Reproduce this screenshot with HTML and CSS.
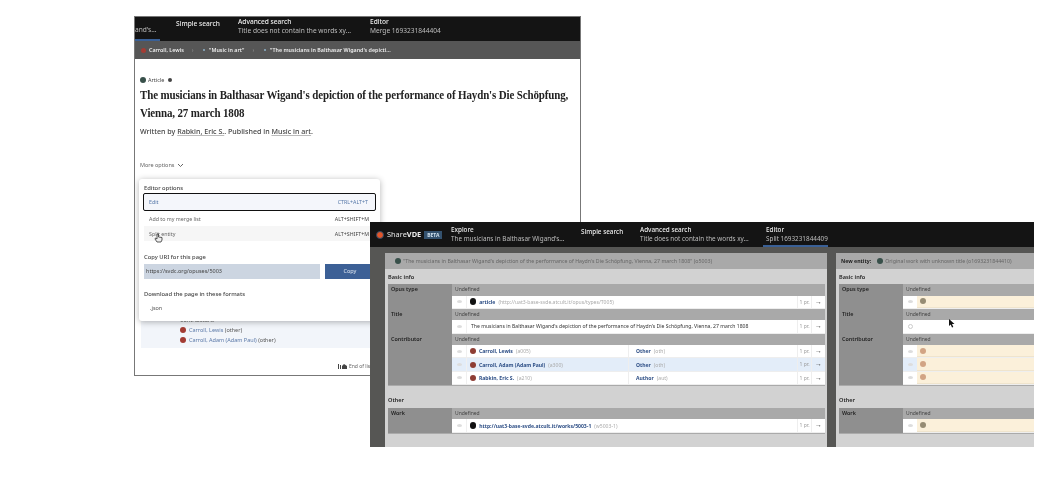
FILE: index.html
```html
<!DOCTYPE html>
<html lang="en">
<head>
<meta charset="utf-8">
<title>ShareVDE editor</title>
<link rel="stylesheet" href="styles.css">
</head>
<body>
<section class="win win-a">
  <header class="bar bar-a">
    <div class="tab tab-cut"><span class="tab-sub">and's...</span></div>
    <div class="tab tab-simple"><b>Simple search</b></div>
    <div class="tab tab-adv"><b>Advanced search</b><span class="tab-sub">Title does not contain the words xy...</span></div>
    <div class="tab"><b>Editor</b><span class="tab-sub">Merge 1693231844404</span></div>
  </header>
  <nav class="crumbs">
    <span class="crumb c1"><i class="ic-red"></i>Carroll, Lewis<span class="sep">›</span></span>
    <span class="crumb c2"><i class="dot"></i>"Music in art"<span class="sep">›</span></span>
    <span class="crumb"><i class="dot"></i>"The musicians in Balthasar Wigand's depicti...</span>
  </nav>
  <main class="article">
    <div class="kind"><i class="ic-green"></i>Article<i class="ic-info"></i></div>
    <h1>The musicians in Balthasar Wigand's depiction of the performance of Haydn's Die Schöpfung, Vienna, 27 march 1808</h1>
    <p class="byline">Written by <u>Rabkin, Eric S.</u>. Published in <u>Music in art</u>.</p>
    <div class="more">More options <svg width="7" height="5" viewBox="0 0 7 5"><path d="M1 1l2.500 2.500L6 1" fill="none" stroke="#555" stroke-width=".9"/></svg></div>
  </main>
  <div class="band">
    <div class="contrib">Contributors:</div>
    <div class="contrib"><i class="ic-red"></i><a>Carroll, Lewis</a> (other)</div>
    <div class="contrib"><i class="ic-red"></i><a>Carroll, Adam (Adam Paul)</a> (other)</div>
  </div>
  <div class="end"><svg width="9" height="7" viewBox="0 0 9 7"><path d="M0 1h1v5H0zM2 2h1v4H2zM4 3l2-2 3 2v3H4z" fill="#444"/></svg> End of list</div>
  <aside class="menu">
    <h2>Editor options</h2>
    <div class="opt opt-on"><span>Edit</span><span>CTRL+ALT+T</span></div>
    <div class="opt"><span>Add to my merge list</span><span class="key">ALT+SHIFT+M</span></div>
    <div class="opt opt-hover"><span>Split entity</span><span class="key">ALT+SHIFT+M</span></div>
    <h2 class="h-uri">Copy URI for this page</h2>
    <div class="copy"><div class="uri">https://svdc.org/opuses/5003</div><div class="btn">Copy</div></div>
    <h2 class="h-dl">Download the page in these formats</h2>
    <div class="json">.json</div>
  </aside>
  <svg class="hand" width="9" height="10" viewBox="0 0 9 10"><path d="M3 1v5L1.500 5 1 6l2 3h4l1-2V4.500L4.500 4V1z" fill="#eee" stroke="#333" stroke-width=".8"/></svg>
</section>

<section class="win win-b">
  <header class="bar bar-b">
    <div class="logo"><i class="logo-dot"></i><span class="logo-name">Share<b>VDE</b></span><span class="beta">BETA</span></div>
    <div class="tab tab-explore"><b>Explore</b><span class="tab-sub">The musicians in Balthasar Wigand's...</span></div>
    <div class="tab tab-simple2"><b>Simple search</b></div>
    <div class="tab tab-adv2"><b>Advanced search</b><span class="tab-sub">Title does not contain the words xy...</span></div>
    <div class="tab tab-on"><b>Editor</b><span class="tab-sub">Split 1693231844409</span></div>
  </header>
  <div class="work">
    <div class="panel panel-left">
      <div class="phead"><i class="ic-green"></i>"The musicians in Balthasar Wigand's depiction of the performance of Haydn's Die Schöpfung, Vienna, 27 march 1808" (o5003)</div>
      <div class="sect">Basic info</div>
      <div class="tbl">
        <div class="lab lab-2">Opus type</div>
        <div class="und">Undefined</div>
        <div class="row"><i class="eye"></i><div class="val"><i class="ic-black"></i><a>article</a><em>(http://uat3-base-svde.atcult.it/opus/types/T005)</em></div><span class="pr">1 pr.</span><span class="arr">→</span></div>
      </div>
      <div class="tbl">
        <div class="lab lab-2">Title</div>
        <div class="und">Undefined</div>
        <div class="row"><i class="eye"></i><div class="val val-text">The musicians in Balthasar Wigand's depiction of the performance of Haydn's Die Schöpfung, Vienna, 27 march 1808</div><span class="pr">1 pr.</span><span class="arr">→</span></div>
      </div>
      <div class="tbl">
        <div class="lab lab-4">Contributor</div>
        <div class="und">Undefined</div>
        <div class="row"><i class="eye"></i><div class="val val-c"><i class="ic-red"></i><a>Carroll, Lewis</a><em>(a005)</em></div><div class="role"><a>Other</a><em>(oth)</em></div><span class="pr">1 pr.</span><span class="arr">→</span></div>
        <div class="row row-blue"><i class="eye"></i><div class="val val-c"><i class="ic-red"></i><a>Carroll, Adam (Adam Paul)</a><em>(a300)</em></div><div class="role"><a>Other</a><em>(oth)</em></div><span class="pr">1 pr.</span><span class="arr">→</span></div>
        <div class="row"><i class="eye"></i><div class="val val-c"><i class="ic-red"></i><a>Rabkin, Eric S.</a><em>(a210)</em></div><div class="role"><a>Author</a><em>(aut)</em></div><span class="pr">1 pr.</span><span class="arr">→</span></div>
      </div>
      <div class="sect sect-other">Other</div>
      <div class="tbl">
        <div class="lab lab-2">Work</div>
        <div class="und">Undefined</div>
        <div class="row"><i class="eye"></i><div class="val"><i class="ic-black"></i><a>http://uat3-base-svde.atcult.it/works/5003-1</a><em>(w5003-1)</em></div><span class="pr">1 pr.</span><span class="arr">→</span></div>
      </div>
    </div>
    <div class="panel panel-right">
      <div class="phead"><b>New entity:</b><i class="ic-green"></i>Original work with unknown title (o1693231844410)</div>
      <div class="sect">Basic info</div>
      <div class="tbl">
        <div class="lab lab-2">Opus type</div>
        <div class="und">Undefined</div>
        <div class="row"><i class="eye"></i><div class="cream"><i class="ic-taupe"></i></div></div>
      </div>
      <div class="tbl">
        <div class="lab lab-2">Title</div>
        <div class="und">Undefined</div>
        <div class="row"><i class="radio"></i><div class="blank"></div></div>
      </div>
      <div class="tbl">
        <div class="lab lab-4">Contributor</div>
        <div class="und">Undefined</div>
        <div class="row"><i class="eye"></i><div class="cream"><i class="ic-peach"></i></div></div>
        <div class="row row-blue"><i class="eye"></i><div class="cream"><i class="ic-peach"></i></div></div>
        <div class="row"><i class="eye"></i><div class="cream"><i class="ic-peach"></i></div></div>
      </div>
      <div class="sect sect-other">Other</div>
      <div class="tbl">
        <div class="lab lab-2">Work</div>
        <div class="und">Undefined</div>
        <div class="row"><i class="eye"></i><div class="cream"><i class="ic-taupe"></i></div></div>
      </div>
    </div>
  </div>
  <svg class="arrow-cursor" width="6" height="9" viewBox="0 0 6 9"><path d="M0 0v7l1.700-1.500L3 8.500l1.300-.6L3 5h2.500z" fill="#111"/></svg>
</section>
</body>
</html>
```
FILE: styles.css
```css
* { box-sizing: border-box; }
html, body { margin: 0; height: 100%; }
body { position: relative; width: 1050px; height: 495px; overflow: hidden; background: #fff; font-family: "Noto Sans", sans-serif; color: #333; }
i { display: block; flex: none; font-style: normal; }
em { font-style: normal; color: #aaa; margin-left: 3px; }
a { color: #2e4f86; }

.win { position: absolute; overflow: hidden; filter: blur(.55px); }
.win-a { left: 134px; top: 16px; width: 447px; height: 360px; background: #fff; border: 1px solid #777; }
.win-b { left: 370px; top: 222px; width: 664px; height: 225px; background: #565654; }

.bar { display: flex; background: #141414; color: #d8d8d8; line-height: 9px; }
.bar-a { height: 24px; font-size: 6.600px; }
.bar-b { height: 25px; font-size: 6.350px; }
.bar b { display: block; font-weight: 500; color: #eee; }
.tab-sub { display: block; white-space: nowrap; color: #bdbdbd; }
.tab-cut { flex: none; width: 25px; height: 24px; margin-right: 16px; padding-top: 8px; border-bottom: 2px solid #3a6096; }
.tab-simple { width: 62px; padding-top: 2px; }
.tab-adv { width: 132px; }

.crumbs { display: flex; align-items: center; height: 18px; padding-left: 6px; background: #565656; color: #eee; font-size: 5.350px; font-weight: 600; }
.crumb { display: flex; align-items: center; white-space: nowrap; }
.c1 { width: 62px; }
.c2 { width: 61px; }
.sep { margin-left: 8px; color: #888; }
.ic-red { width: 5px; height: 5px; margin-right: 3px; border-radius: 50%; background: #a33c34; }
.dot { width: 2px; height: 2px; margin-right: 4px; border-radius: 50%; background: #8fb2c9; }

.article { padding: 17px 6px 0 5px; }
.kind { display: flex; align-items: center; gap: 2px; font-size: 5.500px; line-height: 8px; color: #444; }
.ic-green { width: 6px; height: 6px; border-radius: 50%; background: #38504a; }
.ic-info { width: 4px; height: 4px; margin-left: 2px; border-radius: 50%; background: #444; }
h1 { width: 515px; margin: 2px 0 0; font-family: "Liberation Serif", serif; font-size: 12.800px; line-height: 18px; letter-spacing: -.15px; font-weight: 700; color: #222; transform: scaleX(.856); transform-origin: 0 0; }
.byline { margin: 4px 0 0; font-size: 7.100px; line-height: 10px; font-weight: 500; color: #444; }
.byline u { text-decoration-color: #bbb; }
.more { display: flex; align-items: center; gap: 2px; margin-top: 25px; font-size: 5.500px; line-height: 8px; color: #666; }

.band { position: absolute; left: 6px; top: 298px; width: 440px; height: 33px; padding-left: 39px; background: #f2f5fa; font-size: 5.500px; line-height: 10px; color: #555; }
.contrib { display: flex; align-items: center; white-space: pre; }
.contrib .ic-red { width: 6px; height: 6px; margin-right: 3px; }
.contrib a { color: #5b79a8; }
.end { position: absolute; left: 203px; top: 345px; display: flex; gap: 2px; align-items: center; font-size: 5px; line-height: 8px; color: #666; white-space: nowrap; }

.menu { position: absolute; left: 4px; top: 162px; width: 241px; height: 142px; padding: 5px 4px 0 5px; background: #fff; border-radius: 3px; box-shadow: 0 1px 6px rgba(0,0,0,.3); }
.menu h2 { margin: 0; font-size: 5.800px; line-height: 8px; font-weight: 500; color: #444; }
.opt { display: flex; justify-content: space-between; align-items: center; height: 15px; padding: 0 7px 0 5px; font-size: 5.300px; color: #666; white-space: nowrap; }
.opt-on { height: 18px; margin: 1px 0 0 -1px; border: 1px solid #111; border-radius: 2px; background: #f4f6fb; color: #5577a8; }
.opt-hover { background: #f6f6f6; }
.key { color: #444; }
.h-uri { padding-top: 12px; }
.copy { display: flex; gap: 5px; margin-top: 3px; }
.uri { width: 176px; height: 15px; padding-left: 2px; background: #ccd5e1; font-size: 5.500px; line-height: 15px; color: #444; }
.btn { flex: none; width: 50px; height: 15px; background: #3c6096; color: #dfe7f2; font-size: 5.500px; line-height: 15px; text-align: center; }
.h-dl { padding-top: 11px; }
.json { padding: 6px 0 0 6px; font-size: 5.500px; line-height: 8px; color: #555; }
.hand { position: absolute; left: 19px; top: 216px; }

.logo { display: flex; align-items: center; width: 81px; padding-left: 6px; }
.logo-dot { width: 8px; height: 8px; margin-right: 3px; border-radius: 50%; background: #e2562b; border: 1.500px solid #2c4a66; }
.logo-name { font-size: 7.400px; color: #e5e5e5; }
.logo-name b { display: inline; font-weight: 700; }
.beta { margin-left: 3px; padding: 0 3px; background: #34526f; color: #cfe0ee; font-size: 5px; line-height: 8px; font-weight: 700; }
.tab-explore { width: 130px; padding-top: 3px; }
.tab-simple2 { width: 59px; padding-top: 5px; }
.tab-adv2 { width: 123px; padding-top: 3px; }
.tab-on { width: 65px; height: 25px; padding: 3px 0 0 3px; border-bottom: 2px solid #3a6096; }

.work { display: flex; gap: 9px; height: 200px; padding: 6px 0 0 15px; }
.panel { flex: none; height: 194px; overflow: hidden; background: #d2d2d2; }
.panel-left { width: 442px; padding: 0 2px 0 3px; }
.panel-right { width: 198px; padding: 0 0 0 3px; }
.phead { display: flex; align-items: center; gap: 2px; height: 17px; margin: -1px -3px 1px; padding-left: 10px; background: #a9a9a9; font-size: 5.220px; color: #666; white-space: nowrap; }
.panel-left .phead { margin-right: -2px; }
.panel-right .phead { padding-left: 5px; }
.phead b { margin-right: 4px; font-weight: 700; color: #222; }
.sect { height: 14px; font-size: 5.600px; line-height: 14px; font-weight: 600; color: #222; }
.sect-other { height: 23px; line-height: 30px; }

.tbl { display: grid; grid-template-columns: 64px 1fr; grid-auto-rows: min-content; background: #bbb; box-shadow: 0 1px 0 #aaa; }
.lab { grid-column: 1; padding-left: 3px; background: #8f8f8f; color: #1f1f1f; font-size: 5.400px; line-height: 11px; font-weight: 600; }
.lab-2 { grid-row: span 2; }
.lab-4 { grid-row: span 4; }
.und { grid-column: 2; height: 11.500px; padding-left: 3px; background: #a9a9a9; color: #444; font-size: 5px; line-height: 11px; }
.row { grid-column: 2; display: flex; align-items: center; height: 13.300px; background: #fff; font-size: 5.080px; color: #444; white-space: nowrap; border-bottom: 1px solid #eee; }
.row-blue { background: #e3edf9; }
.eye { width: 5px; height: 3px; margin: 0 4px 0 5px; border-radius: 50%; background: #ddd; }
.val { display: flex; align-items: center; flex: 1; min-width: 0; height: 100%; padding-left: 2.700px; border-left: 1px solid #f0f0f0; }
.val-text { padding-left: 4px; color: #333; }
.val-c { flex: none; width: 162px; }
.val a, .role a { font-weight: 700; }
.ic-black { width: 6.500px; height: 6.500px; margin-right: 3px; border-radius: 50%; background: #111; }
.val .ic-red { width: 6px; height: 6px; margin-right: 3.300px; background: #8e3d34; }
.role { flex: 1; display: flex; align-items: center; height: 100%; padding-left: 7px; border-left: 1px solid #eee; }
.pr { flex: none; width: 14px; height: 100%; color: #999; text-align: center; border-left: 1px solid #eee; line-height: 13px; }
.arr { flex: none; width: 14px; height: 100%; color: #444; text-align: center; line-height: 12px; font-size: 7px; border-left: 1px solid #eee; }
.cream { flex: 1; display: flex; align-items: center; height: 100%; padding-left: 3px; background: #fbf0da; border-bottom: 1px solid #efe4cd; }
.blank { flex: 1; height: 100%; }
.radio { width: 5px; height: 5px; margin: 0 4px 0 5px; border: 1px solid #ccc; border-radius: 50%; }
.ic-taupe { width: 6px; height: 6px; border-radius: 50%; background: #968c74; }
.ic-peach { width: 6px; height: 6px; border-radius: 50%; background: #d2a484; }
.arrow-cursor { position: absolute; left: 579px; top: 97px; }
```
